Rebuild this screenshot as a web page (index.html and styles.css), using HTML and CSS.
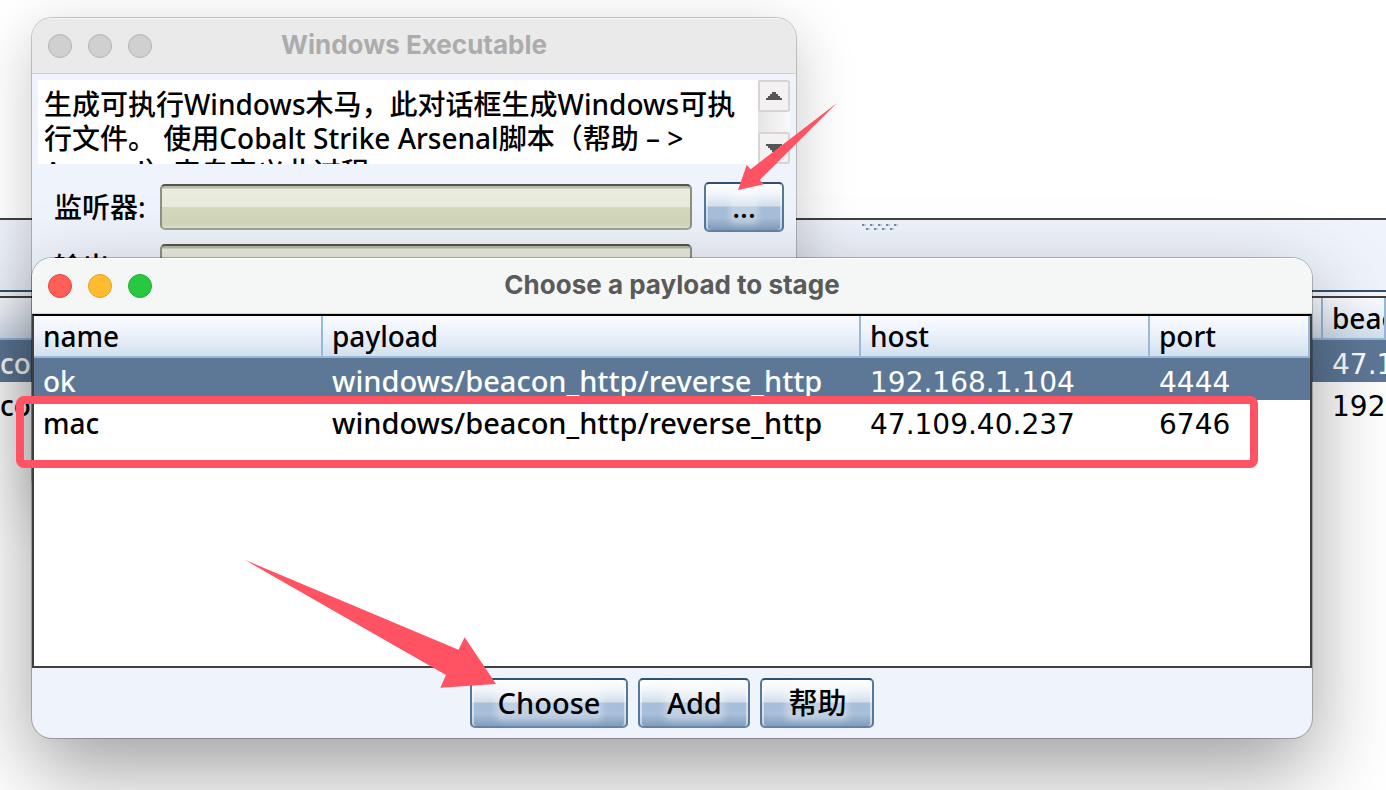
FILE: index.html
```html
<!DOCTYPE html>
<html lang="zh-CN">
<head>
  <meta charset="UTF-8">
  <meta name="viewport" content="width=device-width, initial-scale=1.0">
  <title>Choose a payload to stage</title>
  <link rel="stylesheet" href="styles.css">
</head>
<body>

  <!-- Main console behind the dialogs -->
  <div class="console">
    <div class="console-top"></div>
    <div class="splitter">
      <svg class="grip" width="36" height="6" viewBox="0 0 36 6" shape-rendering="crispEdges">
        <path fill="#c3ccd8" d="M2 0h2v2h-2zM10 0h2v2h-2zM18 0h2v2h-2zM26 0h2v2h-2zM34 0h2v2h-2zM6 4h2v2h-2zM14 4h2v2h-2zM22 4h2v2h-2zM30 4h2v2h-2z"/>
        <path fill="#6a8cae" d="M0 0h2v2h-2zM8 0h2v2h-2zM16 0h2v2h-2zM24 0h2v2h-2zM32 0h2v2h-2zM4 4h2v2h-2zM12 4h2v2h-2zM20 4h2v2h-2zM28 4h2v2h-2z"/>
      </svg>
    </div>
    <table class="grid sites">
      <thead>
        <tr><th></th><th>beacon</th></tr>
      </thead>
      <tbody>
        <tr class="selected"><td>con</td><td class="num">47.109</td></tr>
        <tr><td>con</td><td class="num">192.168</td></tr>
      </tbody>
    </table>
  </div>

  <!-- Windows Executable dialog -->
  <section class="window exe-window">
    <header class="titlebar inactive">
      <div class="lights"><span></span><span></span><span></span></div>
      <h2>Windows Executable</h2>
    </header>
    <div class="exe-body">
      <div class="description">
        <p>生成可执行Windows木马，此对话框生成Windows可执行文件。 使用Cobalt Strike Arsenal脚本（帮助 – > Arsenal）来自定义此过程。</p>
        <div class="scrollbar">
          <button type="button" aria-label="Scroll up"><svg width="16" height="8" viewBox="0 0 16 8" shape-rendering="crispEdges"><path fill="#555" d="M6 0h4v2h2v2h2v2h2v2H0V6h2V4h2V2h2z"/></svg></button>
          <button type="button" aria-label="Scroll down"><svg width="16" height="8" viewBox="0 0 16 8" shape-rendering="crispEdges"><path fill="#555" d="M0 0h16v2h-2v2h-2v2h-2v2H6V6H4V4H2V2H0z"/></svg></button>
        </div>
      </div>
      <div class="form">
        <label for="listener">监听器:</label>
        <input type="text" id="listener" class="field">
        <button type="button" class="btn more"><span>...</span></button>
        <label for="output">输出:</label>
        <select id="output" class="field"><option></option></select>
      </div>
    </div>
  </section>

  <!-- Payload chooser -->
  <section class="window chooser">
    <header class="titlebar">
      <div class="lights"><span class="red"></span><span class="yellow"></span><span class="green"></span></div>
      <h2>Choose a payload to stage</h2>
    </header>
    <div class="table-pane">
      <table class="grid payloads">
        <colgroup><col class="c-name"><col class="c-payload"><col class="c-host"><col></colgroup>
        <thead>
          <tr><th>name</th><th>payload</th><th>host</th><th>port</th></tr>
        </thead>
        <tbody>
          <tr class="selected"><td>ok</td><td class="path">windows/beacon_http/reverse_http</td><td class="num">192.168.1.104</td><td class="num">4444</td></tr>
          <tr><td>mac</td><td class="path">windows/beacon_http/reverse_http</td><td class="num">47.109.40.237</td><td class="num">6746</td></tr>
        </tbody>
      </table>
    </div>
    <footer class="actions">
      <button type="button" class="btn"><span>Choose</span></button>
      <button type="button" class="btn"><span>Add</span></button>
      <button type="button" class="btn"><span>帮助</span></button>
    </footer>
  </section>

  <!-- Annotations -->
  <div class="mark-box"></div>
  <svg class="marks" width="1386" height="790" viewBox="0 0 1386 790">
    <path d="M837 103L759.700 180L764 184.300L738 190L746.700 165L750.700 169.300Z"/>
    <path d="M245 560L458.500 649.700L464.600 637.300L496 684L440.300 687.700L446 675Z"/>
  </svg>

</body>
</html>
```
FILE: styles.css
```css
:root {
  --panel: #eff3fc;
  --line-dark: #404040;
  --line-blue: #9ab8d8;
  --selected: #5d7897;
  --mark: #ff5263;
}

* {
  box-sizing: border-box;
}

body {
  margin: 0;
  height: 100vh;
  position: relative;
  overflow: hidden;
  background: #fff;
  color: #000;
  font-family: "Noto Sans", "Noto Sans CJK SC", sans-serif;
  font-size: 28px;
  font-weight: 500;
}

button, input, select {
  margin: 0;
  font: inherit;
  color: inherit;
}

/* Tables */
.grid {
  width: 100%;
  border-collapse: separate;
  border-spacing: 0;
  table-layout: fixed;
}

.grid th,
.grid td {
  height: 42px;
  padding: 0 9px;
  line-height: 40px;
  text-align: left;
  font-weight: 500;
  white-space: nowrap;
  overflow: hidden;
}

.grid td {
  padding-top: 4px;
  line-height: 38px;
}

.grid th {
  border-right: 2px solid var(--line-blue);
  border-bottom: 2px solid var(--line-blue);
  background: linear-gradient(#f9fbff, #eef3fc 40%, #d3e0ee);
}

.grid .selected {
  background: var(--selected);
  color: #fff;
}

.grid .num {
  padding-top: 8px;
  line-height: 34px;
  font-family: "DejaVu Sans", sans-serif;
}

.grid .path {
  font-size: 29px;
}

/* Console */
.console-top {
  height: 220px;
  border-bottom: 2px solid var(--line-dark);
}

.splitter {
  height: 78px;
  padding-top: 4px;
  padding-left: 862px;
  background: linear-gradient(var(--panel) 70px, #2f516f 70px, #2f516f 72px, #f5f7fc 72px, #f5f7fc 76px, var(--line-dark) 76px);
}

.grip {
  display: block;
}

.sites th:first-child {
  width: 1323px;
}

.sites td:first-child {
  padding-left: 0;
}

/* Windows */
.window {
  position: absolute;
  display: flex;
  flex-direction: column;
  overflow: hidden;
  border-radius: 20px;
  background: var(--panel);
}

.exe-window {
  left: 32px;
  top: 18px;
  width: 764px;
  height: 480px;
  box-shadow: 0 0 0 1px rgba(0, 0, 0, 0.2), 0 16px 60px rgba(0, 0, 0, 0.22);
}

.chooser {
  left: 32px;
  right: 74px;
  top: 258px;
  height: 480px;
  box-shadow: 0 0 0 1px rgba(0, 0, 0, 0.24), 0 32px 84px rgba(0, 0, 0, 0.38);
}

.titlebar {
  flex: 0 0 56px;
  display: grid;
  grid-template-columns: 1fr auto 1fr;
  align-items: center;
  padding: 0 16px;
  border-top: 1px solid #fff;
  border-bottom: 1px solid #cfcfcf;
  background: #f5f7f6;
  color: #5a5a5a;
}

.titlebar h2 {
  margin: 0;
  padding-bottom: 2px;
  font-family: Inter, sans-serif;
  font-size: 26px;
  line-height: 32px;
  font-weight: 700;
}

.titlebar.inactive {
  border-top-color: #f6f6f6;
  background: #eaeaea;
  color: #acacac;
}

.lights {
  display: flex;
  gap: 16px;
}

.lights span {
  width: 24px;
  height: 24px;
  border: 1px solid #b4b4b4;
  border-radius: 50%;
  background: #d0d0d0;
}

.lights .red {
  border-color: #e2463f;
  background: #ff5f57;
}

.lights .yellow {
  border-color: #e0a028;
  background: #febc2e;
}

.lights .green {
  border-color: #1fae34;
  background: #28c840;
}

/* Executable dialog */
.exe-body {
  padding: 6px;
}

.description {
  display: flex;
  height: 84px;
  overflow: hidden;
  background: #fff;
}

.description p {
  flex: 1;
  margin: 0;
  padding: 7px 6px;
  line-height: 34px;
}

.scrollbar {
  flex: 0 0 32px;
  display: flex;
  flex-direction: column;
  justify-content: space-between;
  background: linear-gradient(to right, #e4e4e4, #fafafa);
}

.scrollbar button {
  display: flex;
  align-items: center;
  justify-content: center;
  height: 32px;
  padding: 0;
  border: 2px solid #d6d4d4;
  border-radius: 3px;
  background: #f3f1f1;
}

.form {
  display: grid;
  grid-template-columns: 94px 1fr 80px;
  align-items: center;
  gap: 10px 12px;
  padding: 18px 6px 0 16px;
}

.form label {
  line-height: 50px;
  white-space: nowrap;
}

.field {
  width: 100%;
  height: 46px;
  padding: 0 8px;
  border: 2px solid #8e9180;
  border-top-color: #55574a;
  border-bottom-color: #a3a594;
  border-radius: 5px;
  background: linear-gradient(#b9bcac 2px, #eaecdf 3px, #e9ecdc 21px, #d5d9bd 21px, #d3d8ba 38px, #e0e3d0);
  appearance: none;
}

/* Buttons */
.btn {
  height: 50px;
  min-width: 112px;
  padding: 0 26px;
  border: 2px solid #55789b;
  border-top-color: #2f506f;
  border-bottom-color: #6584a5;
  border-radius: 5px;
  background: linear-gradient(#fff, #f2f5f9 10px, #d2deea 22px, #a5bedb 23px, #a9bfd9 34px, #7f9dbd);
  box-shadow: inset 2px 0 0 rgba(255, 255, 255, 0.5), inset -2px 0 0 rgba(255, 255, 255, 0.5);
  font-size: 29px;
  line-height: 44px;
}

.btn span {
  display: inline-block;
  line-height: 32px;
  border-radius: 4px;
  background: rgba(255, 255, 255, 0.28);
  box-shadow: 0 0 6px 3px rgba(255, 255, 255, 0.28);
}

.btn.more {
  min-width: 0;
  padding: 0;
}

/* Payload chooser */
.table-pane {
  flex: 1;
  border: 2px solid var(--line-dark);
  border-top-color: #000;
  background: #fff;
}

.c-name,
.c-host {
  width: 289px;
}

.c-payload {
  width: 538px;
}

.actions {
  flex: 0 0 70px;
  display: flex;
  align-items: center;
  justify-content: center;
  gap: 10px;
}

/* Annotations */
.mark-box {
  position: absolute;
  left: 16px;
  top: 396px;
  width: 1242px;
  height: 72px;
  border: 8px solid var(--mark);
  border-radius: 8px;
}

.marks {
  position: absolute;
  left: 0;
  top: 0;
  fill: var(--mark);
  pointer-events: none;
}
```
